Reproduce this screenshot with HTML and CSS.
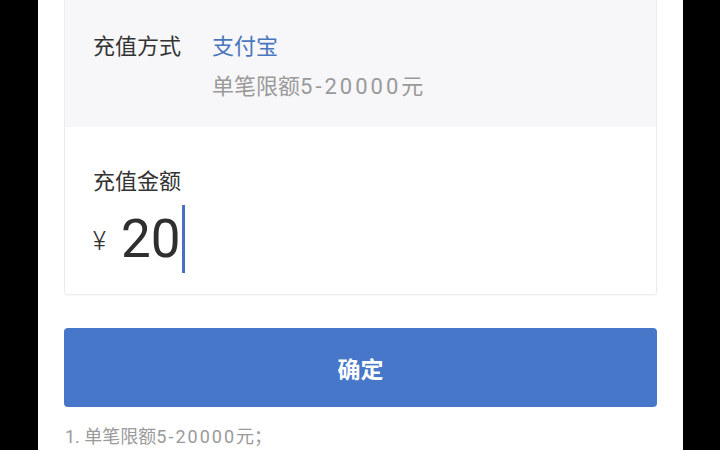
FILE: index.html
```html
<!DOCTYPE html>
<html lang="zh">
<head>
<meta charset="utf-8">
<title>充值</title>
<link rel="stylesheet" href="styles.css">
</head>
<body>
<div class="screen">
  <div class="card">
    <div class="method">
      <div class="label">充值方式</div>
      <div class="value">
        <div class="channel">支付宝</div>
        <div class="limit">单笔限额<span class="num">5-20000</span>元</div>
      </div>
    </div>
    <div class="amount">
      <div class="label">充值金额</div>
      <div class="amount-row">
        <span class="yen">¥</span>
        <span class="digits">20</span>
        <span class="caret"></span>
      </div>
    </div>
  </div>
  <button class="confirm">确定</button>
  <p class="note">1. 单笔限额<span class="num">5-20000</span>元；</p>
</div>
</body>
</html>
```
FILE: styles.css
```css
html, body {
  margin: 0;
  padding: 0;
  height: 100%;
  background: #000;
  overflow: hidden;
}
body {
  font-family: Roboto, "Noto Sans CJK SC", sans-serif;
  display: flex;
  justify-content: flex-start;
}
.screen {
  margin-left: 38px;
  width: 645px;
  height: 100%;
  background: #fff;
  padding: 0 26px;
  box-sizing: border-box;
}
.card {
  border: 1px solid #ececee;
  border-top: none;
  border-radius: 0 0 4px 4px;
  box-shadow: 0 1px 2px rgba(0,0,0,0.04);
  overflow: hidden;
}
.method {
  background: #f7f7f9;
  display: grid;
  grid-template-columns: 119px 1fr;
  padding: 32px 28px 25px;
}
.label {
  font-size: 22px;
  line-height: 30px;
  color: #333;
}
.channel {
  font-size: 22px;
  line-height: 30px;
  color: #4a76bd;
}
.limit {
  margin-top: 10px;
  font-size: 22px;
  line-height: 30px;
  color: #9a9a9a;
}
.num {
  letter-spacing: 3px;
}
.amount {
  background: #fff;
  padding: 40px 28px 21px;
}
.amount-row {
  margin-top: 8px;
  height: 68px;
  display: flex;
  align-items: center;
}
.yen {
  font-size: 25px;
  font-weight: 300;
  color: #333;
  margin-left: 0;
  margin-right: 15px;
  margin-top: 4px;
}
.digits {
  font-size: 53px;
  color: #2f2f2f;
  line-height: 68px;
}
.caret {
  width: 3px;
  height: 68px;
  background: #4a6fbf;
  margin-left: 2px;
}
.confirm {
  display: block;
  width: 100%;
  margin-top: 33px;
  height: 79px;
  border: none;
  border-radius: 4px;
  background: #4677c9;
  color: #fff;
  font-family: Roboto, "Noto Sans CJK SC", sans-serif;
  font-size: 23px;
  font-weight: bold;
}
.note {
  margin: 17px 0 0 1px;
  font-size: 18px;
  line-height: 26px;
  color: #9a9a9a;
}
.note .num {
  letter-spacing: 2px;
}
```
